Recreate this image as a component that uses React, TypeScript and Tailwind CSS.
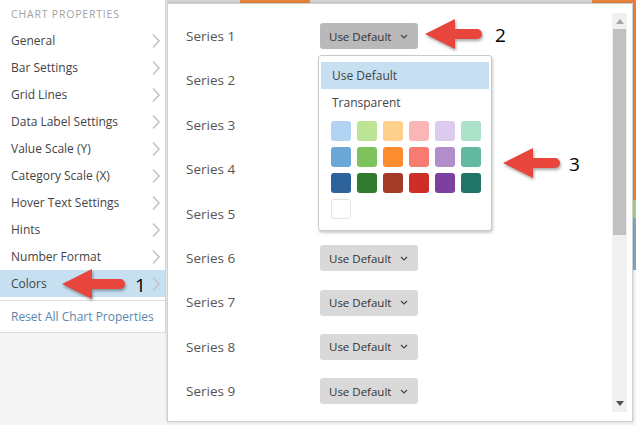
import React from "react";

const font = { fontFamily: '"Open Sans", "Noto Sans", sans-serif' };

const menu = [
  "General",
  "Bar Settings",
  "Grid Lines",
  "Data Label Settings",
  "Value Scale (Y)",
  "Category Scale (X)",
  "Hover Text Settings",
  "Hints",
  "Number Format",
  "Colors",
];

const swatches = [
  ["#b2d4f2", "#bde394", "#fdd18c", "#fbb7b5", "#ddcaef", "#abe2c9"],
  ["#6ca8d7", "#7dc25c", "#fc8c30", "#f87b72", "#b18dc9", "#62b9a0"],
  ["#2e629b", "#317c2c", "#a43b29", "#cf2e28", "#7e40a0", "#1f7568"],
];

function Chevron() {
  return (
    <svg width="10" height="16" viewBox="0 0 10 16" className="shrink-0">
      <path d="M2 1.5 L8 8 L2 14.5" fill="none" stroke="#c4c4c4" strokeWidth="1.6" />
    </svg>
  );
}

function Caret() {
  return (
    <svg width="8" height="5" viewBox="0 0 8 5" className="shrink-0">
      <path d="M1 1 L4 4 L7 1" fill="none" stroke="#444" strokeWidth="1.2" />
    </svg>
  );
}

function Arrow({ n, len, gap, className }: { n: string; len: number; gap: number; className: string }) {
  const end = len - 5;
  return (
    <div className={`absolute flex items-center pointer-events-none ${className}`}>
      <svg width={len + 2} height="36" viewBox={`0 0 ${len + 2} 36`} className="drop-shadow-[1px_2px_1.5px_rgba(0,0,0,0.35)]">
        <path
          d={`M1 17 L31 2 L31 12 L${end} 12 A5 5 0 0 1 ${end} 22 L31 22 L31 32 Z`}
          fill="#e8453c"
        />
      </svg>
      <span
        className="text-[19px] leading-none text-black"
        style={{ fontFamily: '"Open Sans", sans-serif', marginLeft: gap }}
      >
        {n}
      </span>
    </div>
  );
}

function UseDefault({ active }: { active?: boolean }) {
  return (
    <div
      className={`flex items-center gap-[9px] h-[26px] pl-[9px] pr-[10px] rounded-[3px] text-[11.5px] text-[#333] ${
        active ? "bg-[#b9b9b9]" : "bg-[#d9d9d9]"
      }`}
    >
      <span>Use Default</span>
      <Caret />
    </div>
  );
}

export default function App() {
  return (
    <div className="relative w-[636px] h-[425px] bg-[#f5f5f5] overflow-hidden" style={font}>
      {/* background chart bits behind panels */}
      <div className="absolute left-0 top-0 w-[636px] h-[3px] bg-[#d6d6d6]" />
      <div className="absolute left-[240px] top-0 w-[70px] h-[3px] bg-[#e8843a]" />
      <div className="absolute left-[592px] top-0 w-[44px] h-[3px] bg-[#e8843a]" />
      <div className="absolute left-[633px] top-0 w-[3px] h-[200px] bg-[#e8843a]" />
      <div className="absolute left-[633px] top-[200px] w-[3px] h-[18px] bg-[#a8d08a]" />
      <div className="absolute left-[633px] top-[218px] w-[3px] h-[52px] bg-[#7fa8c8]" />

      <div className="relative flex items-start h-full">
        {/* left panel */}
        <div className="w-[166px] bg-white border-r border-b border-[#dcdcdc] flex flex-col">
          <div className="h-[27px] flex items-center pl-[11px] pt-[3px] text-[10.5px] tracking-[0.8px] text-[#a3a3a3]">
            CHART PROPERTIES
          </div>
          {menu.map((m) => (
            <div
              key={m}
              className={`h-[27px] flex items-center justify-between pl-[11px] pr-[4px] text-[12px] text-[#444] ${
                m === "Colors" ? "bg-[#c6dff1]" : ""
              }`}
            >
              <span>{m}</span>
              <Chevron />
            </div>
          ))}
          <div className="h-[3px]" />
          <div className="h-[32px] flex items-center pl-[11px] border-t border-[#dedede] text-[12px] text-[#5b87ae]">
            Reset All Chart Properties
          </div>
        </div>

        {/* main panel */}
        <div className="relative mt-[3px] ml-[1px] w-[466px] h-[419px] bg-white border border-[#d0d0d0] shadow-[0_0_3px_rgba(0,0,0,0.18)] flex">
          <div className="relative flex-1 pt-[10px] pl-[18px]">
            {Array.from({ length: 9 }, (_, i) => (
              <div key={i} className="h-[44.4px] flex items-center">
                <div className="w-[134px] text-[13.5px] text-[#555]">Series {i + 1}</div>
                <div className={i >= 1 && i <= 4 ? "invisible" : ""}>
                  <UseDefault active={i === 0} />
                </div>
              </div>
            ))}

            {/* dropdown */}
            <div className="absolute left-[150px] top-[51px] w-[174px] h-[176px] bg-white border border-[#c9c9c9] rounded-[3px] shadow-[1px_2px_3px_rgba(0,0,0,0.2)] px-[2px] pt-[6px]">
              <div className="h-[27px] flex items-center pl-[11px] bg-[#c6dff1] text-[12px] text-[#444]">Use Default</div>
              <div className="h-[27px] flex items-center pl-[11px] text-[12px] text-[#444]">Transparent</div>
              <div className="grid grid-cols-6 gap-[6px] w-[150px] ml-[10px] mt-[5px]">
                {swatches.flat().map((c, i) => (
                  <div key={i} className="w-[20px] h-[20px] rounded-[3px]" style={{ backgroundColor: c }} />
                ))}
                <div className="w-[20px] h-[20px] rounded-[3px] bg-white border border-[#e3e3e3]" />
              </div>
            </div>
          </div>

          {/* scrollbar */}
          <div className="w-[15px] mt-[9px] mb-[9px] mr-[5px] bg-[#f0f0f0] flex flex-col">
            <div className="h-[16px] flex items-center justify-center">
              <svg width="8" height="5" viewBox="0 0 8 5">
                <path d="M0 5 L4 0 L8 5 Z" fill="#a6a6a6" />
              </svg>
            </div>
            <div className="h-[206px] bg-[#c1c1c1] mx-[1px]" />
            <div className="flex-1" />
            <div className="h-[17px] flex items-center justify-center">
              <svg width="8" height="5" viewBox="0 0 8 5">
                <path d="M0 0 L8 0 L4 5 Z" fill="#505050" />
              </svg>
            </div>
          </div>
        </div>
      </div>

      <Arrow n="1" len={64} gap={8} className="left-[61px] top-[267px]" />
      <Arrow n="2" len={58} gap={11} className="left-[424px] top-[17px]" />
      <Arrow n="3" len={58} gap={7} className="left-[502px] top-[146px]" />
    </div>
  );
}
